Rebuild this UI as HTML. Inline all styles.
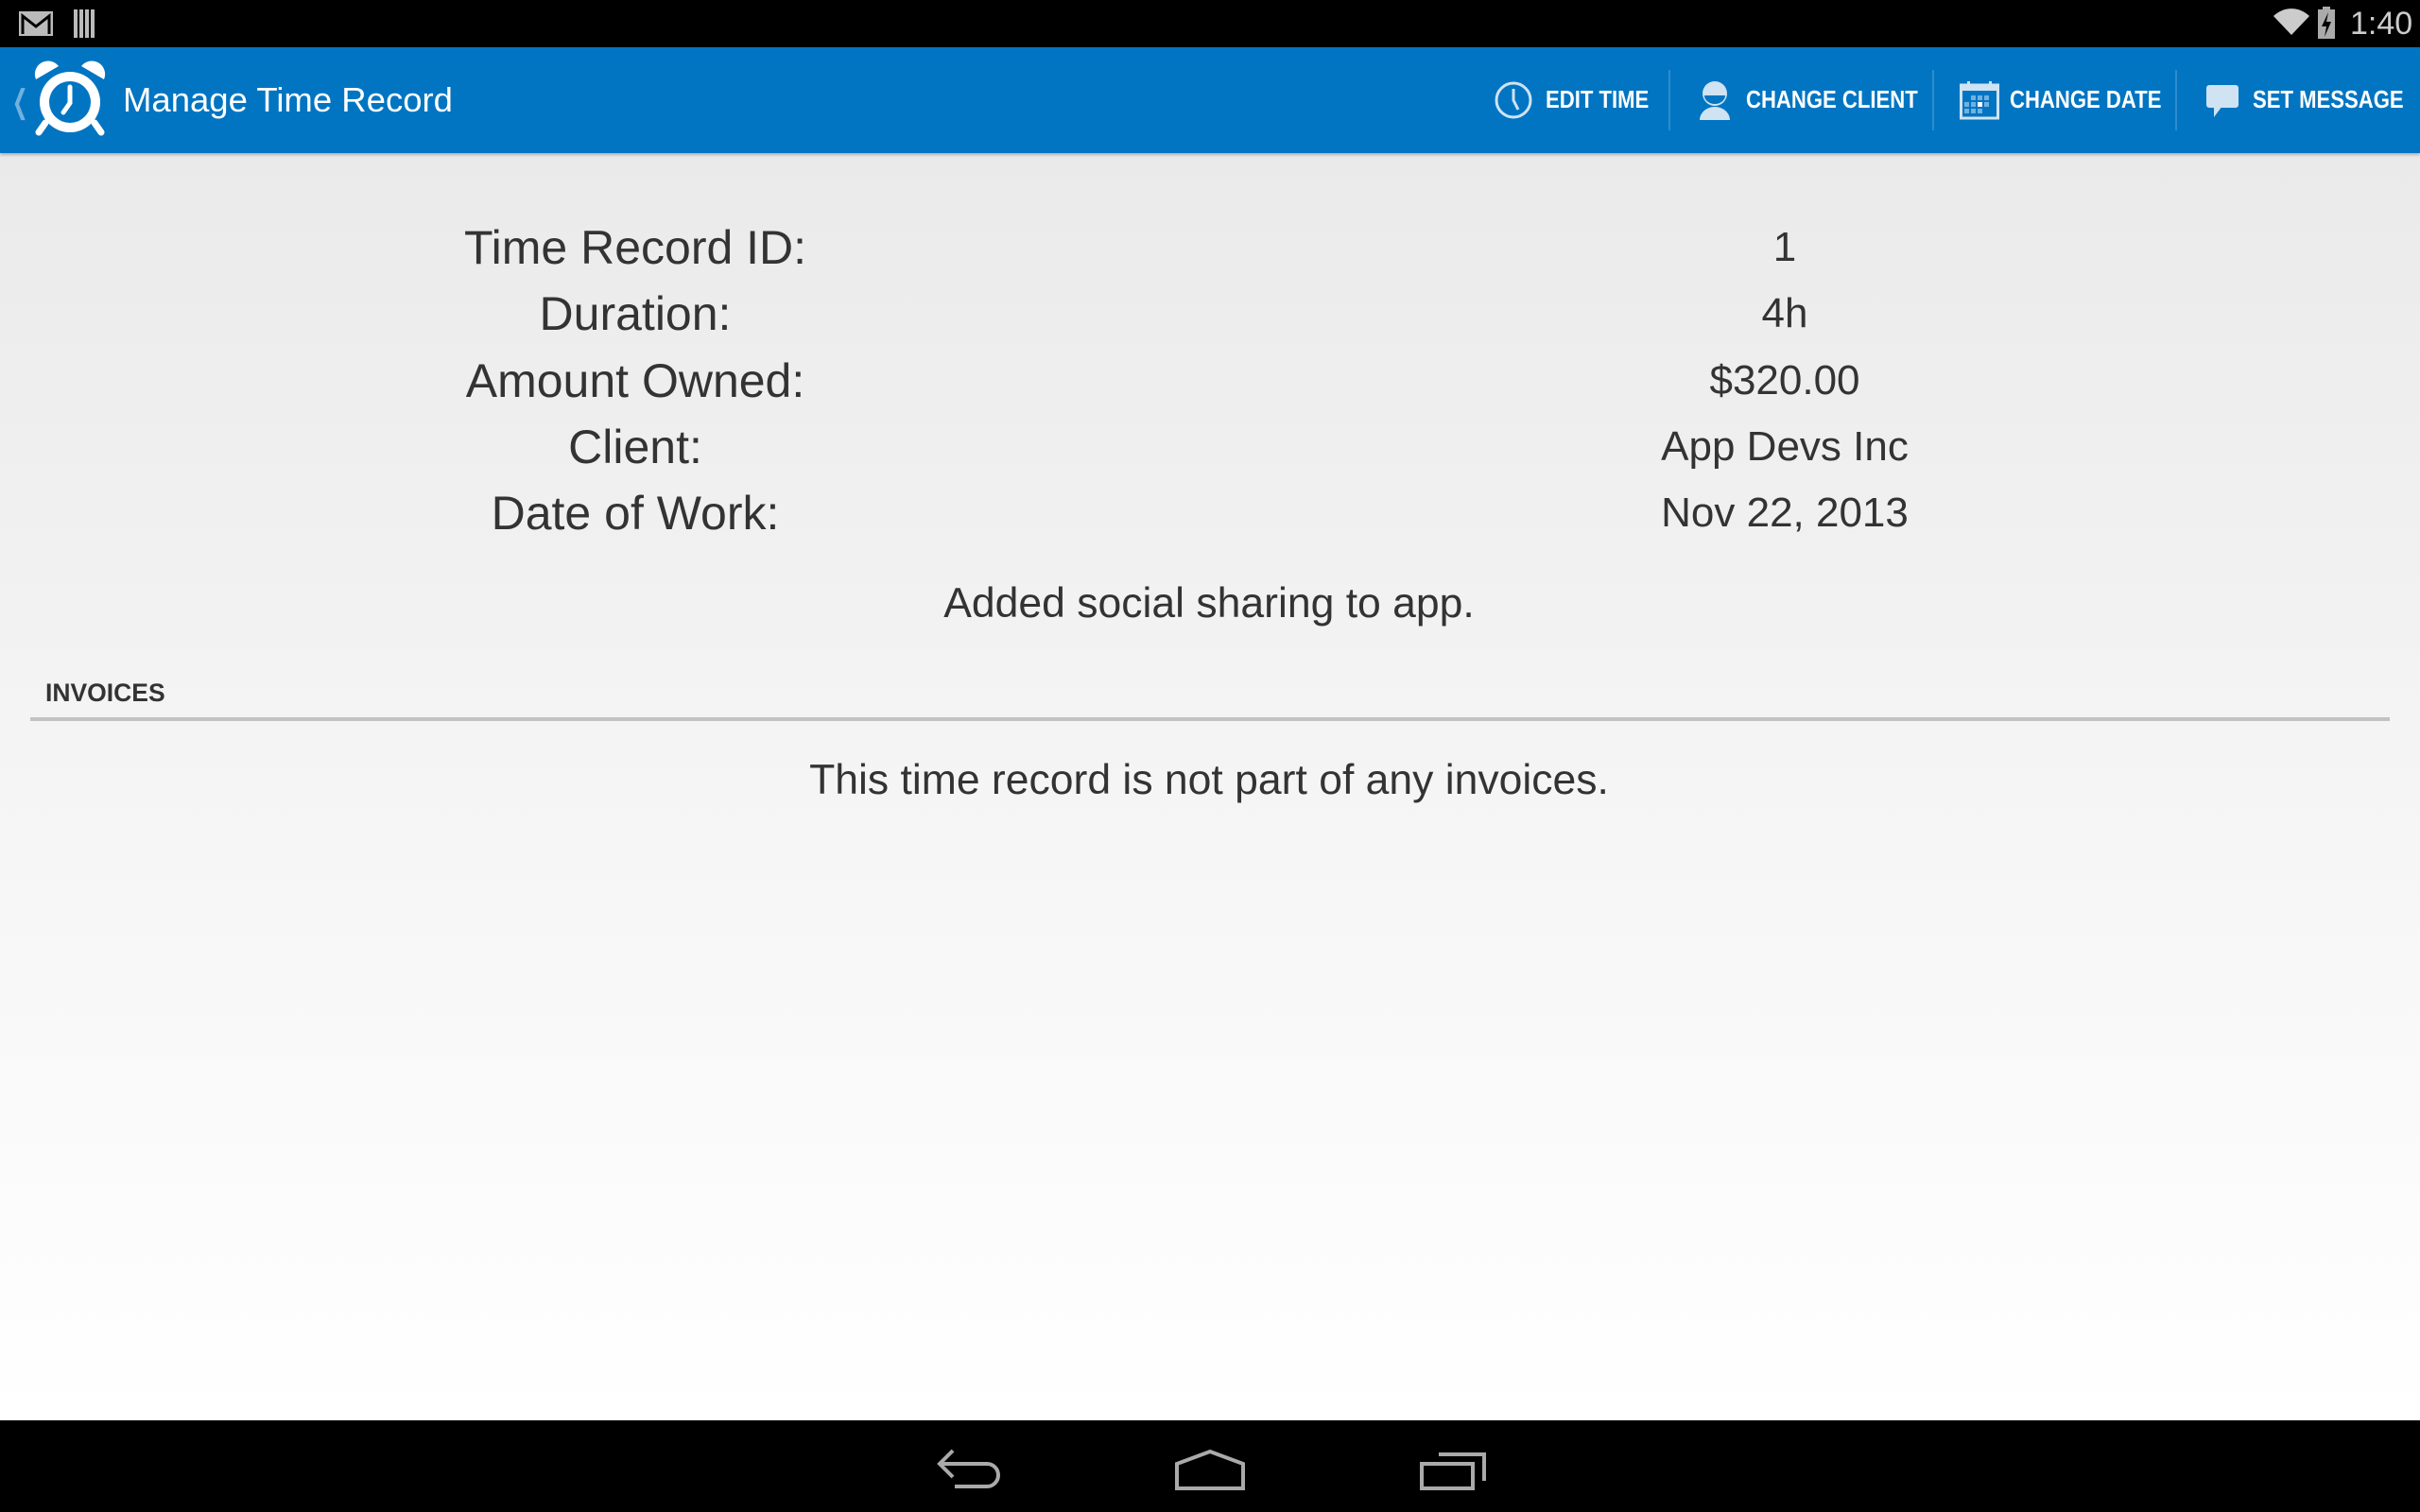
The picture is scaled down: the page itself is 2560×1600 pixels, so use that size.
<!DOCTYPE html>
<html><head><meta charset="utf-8"><style>
*{margin:0;padding:0;box-sizing:border-box}
body{width:2560px;height:1600px;overflow:hidden;font-family:"Liberation Sans",sans-serif;position:relative;background:linear-gradient(#eaeaea 160px,#f6f6f6 900px,#fff 1500px)}
.abs{position:absolute}
#sb{left:0;top:0;width:2560px;height:50px;background:#000}
#ab{left:0;top:50px;width:2560px;height:112px;background:#0175c2;box-shadow:0 2px 3px rgba(0,0,0,.25)}
#nb{left:0;top:1503px;width:2560px;height:97px;background:#000}
.t{position:absolute;color:#333;font-size:50px;white-space:nowrap;transform:translateX(-50%)}
.act{position:absolute;top:40px;color:#fff;font-weight:bold;font-size:26px;white-space:nowrap;transform-origin:left center;transform:scaleX(.85)}
.div{position:absolute;top:24px;width:2px;height:64px;background:#2d8ccd}
</style></head><body>
<div id="sb" class="abs">
 <svg class="abs" style="left:20px;top:12px" width="36" height="26"><rect x="0" y="0" width="36" height="26" fill="#bbb"/><path d="M4 24V5l14 11 14-11v19" fill="none" stroke="#000" stroke-width="3"/></svg>
 <svg class="abs" style="left:78px;top:10px" width="24" height="30"><g fill="#bbb"><rect x="0" y="0" width="4" height="30"/><rect x="6" y="0" width="4" height="30"/><rect x="12" y="0" width="4" height="30"/><rect x="18" y="0" width="4" height="30"/></g></svg>
 <svg class="abs" style="left:2405px;top:8px" width="38" height="30"><path d="M19 29L0 9a27 27 0 0 1 38 0z" fill="#ccc"/></svg>
 <svg class="abs" style="left:2452px;top:7px" width="18" height="34"><rect x="5" y="0" width="8" height="4" fill="#aaa"/><rect x="0" y="3" width="18" height="31" fill="#aaa"/><path d="M11 6L4 21h5l-2 11 7-16H9z" fill="#000"/></svg>
 <div class="abs" style="left:2486px;top:6px;color:#ccc;font-size:34px">1:40</div>
</div>
<div id="ab" class="abs">
 <div class="abs" style="left:7px;top:38px;color:#6fb1e0;font-size:34px;transform:scaleX(.6)">&#10094;</div>
 <svg class="abs" style="left:34px;top:14px" width="80" height="82" viewBox="0 0 80 82">
  <path d="M4 20a14 14 0 0 1 24-14z" fill="#fff"/><path d="M76 20a14 14 0 0 0-24-14z" fill="#fff"/>
  <path d="M14 66l-7 10" stroke="#fff" stroke-width="7" stroke-linecap="round"/><path d="M66 66l7 10" stroke="#fff" stroke-width="7" stroke-linecap="round"/>
  <circle cx="40" cy="44" r="32" fill="#fff"/><circle cx="40" cy="44" r="22" fill="#0175c2"/>
  <path d="M40 28v17l-7 10" fill="none" stroke="#fff" stroke-width="5" stroke-linecap="round"/>
 </svg>
 <div class="abs" style="left:130px;top:35px;color:#fff;font-size:36.5px">Manage Time Record</div>
 <svg class="abs" style="left:1580px;top:35px" width="42" height="42"><circle cx="21" cy="21" r="18" fill="none" stroke="#cfe3f3" stroke-width="3"/><path d="M21 9v12l5 10" fill="none" stroke="#cfe3f3" stroke-width="3"/></svg>
 <div class="act" style="left:1635px">EDIT TIME</div>
 <div class="div" style="left:1765px"></div>
 <svg class="abs" style="left:1796px;top:35px" width="36" height="42"><circle cx="18" cy="14" r="13" fill="#cfe3f3"/><path d="M7 16a11 9 0 0 0 22 0z" fill="#0175c2"/><path d="M2 42a16 14 0 0 1 32 0z" fill="#cfe3f3"/></svg>
 <div class="act" style="left:1847px">CHANGE CLIENT</div>
 <div class="div" style="left:2044px"></div>
 <svg class="abs" style="left:2073px;top:35px" width="42" height="42"><rect x="1.5" y="5" width="39" height="35" fill="none" stroke="#cfe3f3" stroke-width="3"/><rect x="1.5" y="5" width="39" height="6" fill="#cfe3f3"/><rect x="8" y="1" width="3" height="8" fill="#cfe3f3"/><rect x="31" y="1" width="3" height="8" fill="#cfe3f3"/><g fill="#6fb1e0"><rect x="12" y="16" width="5" height="5"/><rect x="19" y="16" width="5" height="5"/><rect x="26" y="16" width="5" height="5"/><rect x="5" y="23" width="5" height="5"/><rect x="12" y="23" width="5" height="5"/><rect x="26" y="23" width="5" height="5"/><rect x="5" y="30" width="5" height="5"/><rect x="12" y="30" width="5" height="5"/><rect x="19" y="30" width="5" height="5"/></g><rect x="19" y="23" width="5" height="5" fill="#fff"/></svg>
 <div class="act" style="left:2126px">CHANGE DATE</div>
 <div class="div" style="left:2301px"></div>
 <svg class="abs" style="left:2334px;top:40px" width="34" height="34"><rect x="0" y="0" width="34" height="24" rx="3" fill="#cfe3f3"/><path d="M8 22v12l9-12z" fill="#cfe3f3"/></svg>
 <div class="act" style="left:2383px">SET MESSAGE</div>
</div>
<div class="t" style="left:672px;top:233px">Time Record ID:</div>
<div class="t" style="left:672px;top:303px">Duration:</div>
<div class="t" style="left:672px;top:374px">Amount Owned:</div>
<div class="t" style="left:672px;top:444px">Client:</div>
<div class="t" style="left:672px;top:514px">Date of Work:</div>
<div class="t" style="left:1888px;top:237px;font-size:44px">1</div>
<div class="t" style="left:1888px;top:307px;font-size:44px">4h</div>
<div class="t" style="left:1888px;top:378px;font-size:44px">$320.00</div>
<div class="t" style="left:1888px;top:448px;font-size:44px">App Devs Inc</div>
<div class="t" style="left:1888px;top:518px;font-size:44px">Nov 22, 2013</div>
<div class="t" style="left:1279px;top:614px;font-size:44.5px">Added social sharing to app.</div>
<div class="abs" style="left:48px;top:718px;color:#333;font-size:26.5px;font-weight:bold">INVOICES</div>
<div class="abs" style="left:32px;top:759px;width:2496px;height:4px;background:#c2c2c2"></div>
<div class="t" style="left:1279px;top:801px;font-size:44.5px">This time record is not part of any invoices.</div>
<div id="nb" class="abs">
 <svg class="abs" style="left:990px;top:30px" width="70" height="44"><path d="M18 2L4 16l14 14M4 16h50a12 12 0 0 1 0 24H20" fill="none" stroke="#aaa" stroke-width="4"/></svg>
 <svg class="abs" style="left:1242px;top:30px" width="76" height="44"><path d="M3 42V16L38 3l35 13v26z" fill="none" stroke="#aaa" stroke-width="4"/></svg>
 <svg class="abs" style="left:1502px;top:34px" width="72" height="40"><rect x="2" y="12" width="54" height="26" fill="none" stroke="#aaa" stroke-width="4"/><path d="M20 2h48v28" fill="none" stroke="#aaa" stroke-width="4"/></svg>
</div>
</body></html>
